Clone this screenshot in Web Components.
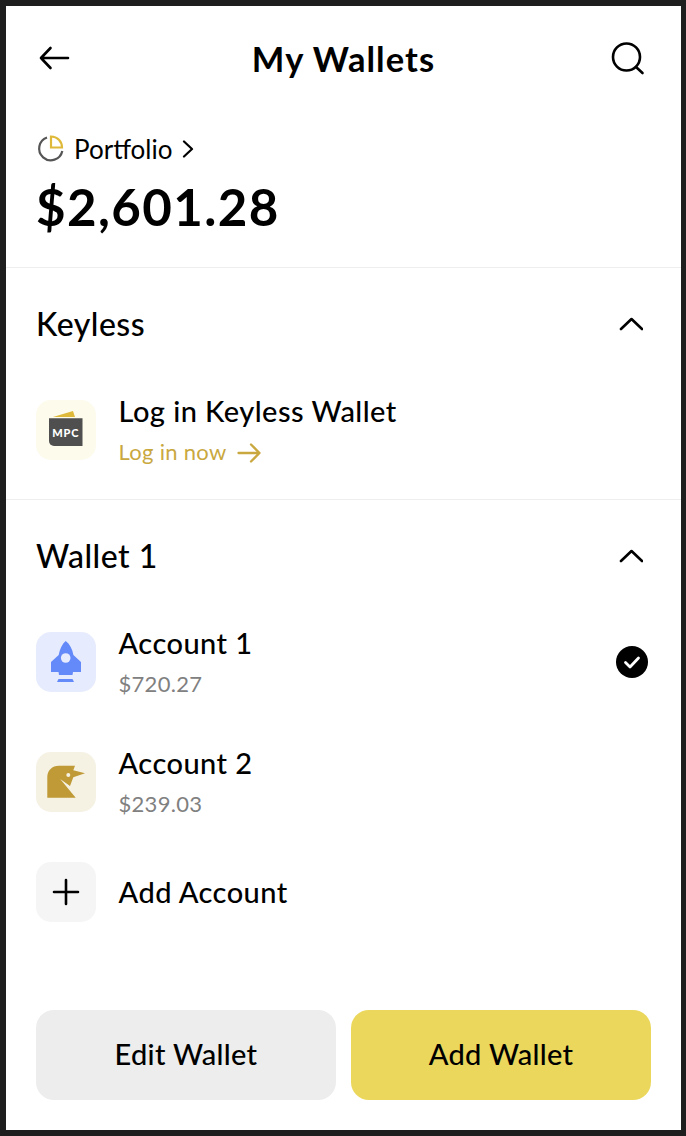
<!DOCTYPE html>
<html>
<head>
<meta charset="utf-8">
<title>My Wallets</title>
<style>
  html, body { margin: 0; padding: 0; height: 100%; background: #1e1e1e; }
  body { font-family: "Lato", "Noto Sans", sans-serif; color: #000; }
</style>
</head>
<body>
<template id="phone-frame-tpl">
  <style>
    :host { display: block; box-sizing: border-box; width: 686px; height: 1136px; padding: 6px 5px 6px 6px; background: #1e1e1e; }
    .screen { display: flex; flex-direction: column; height: 100%; background: #fff; }
    ::slotted(action-bar) { margin-top: auto; }
  </style>
  <div class="screen"><slot></slot></div>
</template>

<template id="top-bar-tpl">
  <style>
    :host { display: grid; grid-template-columns: 1fr auto 1fr; align-items: center; height: 106px; padding: 0 30px; }
    h1 { margin: 0; font-size: 34.5px; font-weight: 700; letter-spacing: 1.05px; line-height: 40px; }
    svg { display: block; }
    .search { justify-self: end; margin-right: 6px; }
  </style>
  <svg width="34" height="34" viewBox="0 0 34 34" fill="none" stroke="#000" stroke-width="2.6" stroke-linecap="round" stroke-linejoin="round"><path d="M5 16h27M14.500 6 5 16l9.500 10"/></svg>
  <h1><slot></slot></h1>
  <svg class="search" width="36" height="36" viewBox="0 0 36 36" fill="none" stroke="#000" stroke-width="2.6" stroke-linecap="round"><circle cx="17.500" cy="16" r="13.500"/><path d="m27 26 6.500 6"/></svg>
</template>

<template id="portfolio-summary-tpl">
  <style>
    :host { display: block; padding: 20px 30px 30px; border-bottom: 1px solid #eeeeee; }
    .link { display: flex; align-items: center; height: 34px; font-size: 26px; line-height: 34px; }
    .link span { margin: 0 10px 0 9px; }
    .amount { font-size: 51px; font-weight: 700; line-height: 60px; margin-top: 11px; letter-spacing: 1.4px; }
    svg { display: block; flex: none; }
  </style>
  <div class="link">
    <svg width="29" height="30" viewBox="0 0 29 30" fill="none" stroke-width="2.200"><path d="M11 3.500a11.700 11.700 0 1 0 15.300 13.500" stroke="#555"/><path d="M15 2.500c6.500 0 11 5 11 11H15z" stroke="#dfba3a"/></svg>
    <span>Portfolio</span>
    <svg width="12" height="18" viewBox="0 0 12 18" fill="none" stroke="#000" stroke-width="2.200" stroke-linecap="round" stroke-linejoin="round"><path d="m2 1.500 8 7.500-8 7.500"/></svg>
  </div>
  <div class="amount"><slot></slot></div>
</template>

<template id="wallet-section-tpl">
  <style>
    :host { display: block; padding: 0 30px 30px; }
    :host([divided]) { padding-bottom: 29px; border-bottom: 1px solid #eeeeee; }
    header { display: flex; align-items: center; justify-content: space-between; height: 112px; margin-bottom: 20px; }
    h2 { margin: 0; font-size: 32px; font-weight: 500; line-height: 40px; letter-spacing: .5px; }
    .rows { display: flex; flex-direction: column; gap: 50px; }
    svg { display: block; margin-right: 8px; }
  </style>
  <header>
    <h2></h2>
    <svg width="24" height="14" viewBox="0 0 24 14" fill="none" stroke="#000" stroke-width="2.600" stroke-linecap="round" stroke-linejoin="round"><path d="M2 12 12.500 2 23 12"/></svg>
  </header>
  <div class="rows"><slot></slot></div>
</template>

<template id="account-row-tpl">
  <style>
    :host { display: flex; align-items: flex-start; height: 60px; padding-bottom: 10px; }
    :host([tight]) { padding-bottom: 0; }
    :host([plain]) { padding-bottom: 0; align-items: center; }
    .tile { width: 60px; height: 60px; border-radius: 15px; flex: none; margin-right: 22.5px; background: var(--tile, #f5f5f5); display: flex; align-items: center; justify-content: center; }
    .text { flex: 1; min-width: 0; }
    .title { font-size: 29px; line-height: 36px; letter-spacing: .45px; font-weight: 500; margin-top: -7px; }
    :host([plain]) .title { margin-top: -1px; }
    .sub { display: flex; align-items: center; font-size: 22px; line-height: 30px; margin-top: 8px; color: var(--sub, #808080); letter-spacing: .3px; }
    :host([plain]) .sub { display: none; }
    .end { flex: none; align-self: center; margin: 0 3px 0 0; }
    :host([plain]) .end { display: none; }
    ::slotted(svg) { display: block; }
  </style>
  <div class="tile"><slot name="icon"></slot></div>
  <div class="text">
    <div class="title"><slot></slot></div>
    <div class="sub"><slot name="sub"></slot></div>
  </div>
  <div class="end"><slot name="end"></slot></div>
</template>

<template id="action-bar-tpl">
  <style>
    :host { display: grid; grid-template-columns: 300px 300px; gap: 15px; padding: 0 30px 30px; }
  </style>
  <slot></slot>
</template>

<template id="action-button-tpl">
  <style>
    :host { display: flex; align-items: center; justify-content: center; box-sizing: border-box; height: 90px; padding-bottom: 3px; border-radius: 18px; background: #ededed; font-size: 29px; font-weight: 500; letter-spacing: .3px; }
    :host([primary]) { background: #ebd75b; }
  </style>
  <slot></slot>
</template>

<phone-frame>
  <top-bar>My Wallets</top-bar>
  <portfolio-summary>$2,601.28</portfolio-summary>

  <wallet-section title-text="Keyless" divided>
    <account-row style="--tile:#fdfbec;--sub:#c9a83f">
      <svg slot="icon" width="60" height="60" viewBox="0 0 60 60">
        <path d="M17 17 37 11 39 17z" fill="#dfba3a"/>
        <path d="M13 18.300h33.500V46H18a5 5 0 0 1-5-5z" fill="#4f4f4f"/>
        <text x="29.800" y="37" text-anchor="middle" font-family="Lato, sans-serif" font-weight="900" font-size="11" letter-spacing=".8" fill="#fff">MPC</text>
      </svg>
      Log in Keyless Wallet
      <span slot="sub">Log in now<svg style="margin-left:10px;vertical-align:-3px" width="24" height="20" viewBox="0 0 24 20" fill="none" stroke="#c9a83f" stroke-width="2.300" stroke-linecap="round" stroke-linejoin="round"><path d="M1.500 10h21M14 1.500l8.500 8.500-8.500 8.500"/></svg></span>
    </account-row>
  </wallet-section>

  <wallet-section title-text="Wallet 1">
    <account-row style="--tile:#e6ebfd">
      <svg slot="icon" width="60" height="60" viewBox="0 0 60 60" fill="#6489f8">
        <path d="M29.700 9c4 3 6.800 8 7.700 14l7.600 7v10H37l-.5 3H23l-.5-3H15V30l7.700-7c1-6 3.500-11 7-14z"/>
        <path d="M22.500 47h14l1.500 3H21z"/>
        <circle cx="29.700" cy="26" r="4.800" fill="#e6ebfd"/>
      </svg>
      Account 1
      <span slot="sub">$720.27</span>
      <svg slot="end" width="32" height="32" viewBox="0 0 32 32"><circle cx="16" cy="16" r="16" fill="#000"/><path d="m9.500 16.500 4.500 4.500 8.500-9" fill="none" stroke="#fff" stroke-width="2.800" stroke-linecap="round" stroke-linejoin="round"/></svg>
    </account-row>
    <account-row tight style="--tile:#f5f1e3">
      <svg slot="icon" width="60" height="60" viewBox="0 0 60 60">
        <path d="M11.300 45.700V25c0-6.500 5-11.300 11.500-11.300H39l-1.700 4.500L49 21.300l-11.700 4L34 34l-9.800-6.900 15.500 18.600z" fill="#bf9a36"/>
        <circle cx="32.300" cy="23" r="2" fill="#f5f1e3"/>
      </svg>
      Account 2
      <span slot="sub">$239.03</span>
    </account-row>
    <account-row plain>
      <svg slot="icon" width="60" height="60" viewBox="0 0 60 60" fill="none" stroke="#000" stroke-width="2.600" stroke-linecap="round"><path d="M30 18v24M18 30h24"/></svg>
      Add Account
    </account-row>
  </wallet-section>

  <action-bar>
    <action-button>Edit Wallet</action-button>
    <action-button primary>Add Wallet</action-button>
  </action-bar>
</phone-frame>

<script>
  function define(name, tplId, setup) {
    customElements.define(name, class extends HTMLElement {
      constructor() {
        super();
        const shadow = this.attachShadow({ mode: 'open' });
        shadow.appendChild(document.getElementById(tplId).content.cloneNode(true));
        if (setup) setup(this, shadow);
      }
    });
  }

  define('phone-frame', 'phone-frame-tpl');
  define('top-bar', 'top-bar-tpl');
  define('portfolio-summary', 'portfolio-summary-tpl');
  define('wallet-section', 'wallet-section-tpl', (el, shadow) => {
    shadow.querySelector('h2').textContent = el.getAttribute('title-text') || '';
  });
  define('account-row', 'account-row-tpl');
  define('action-bar', 'action-bar-tpl');
  define('action-button', 'action-button-tpl');
</script>
</body>
</html>
